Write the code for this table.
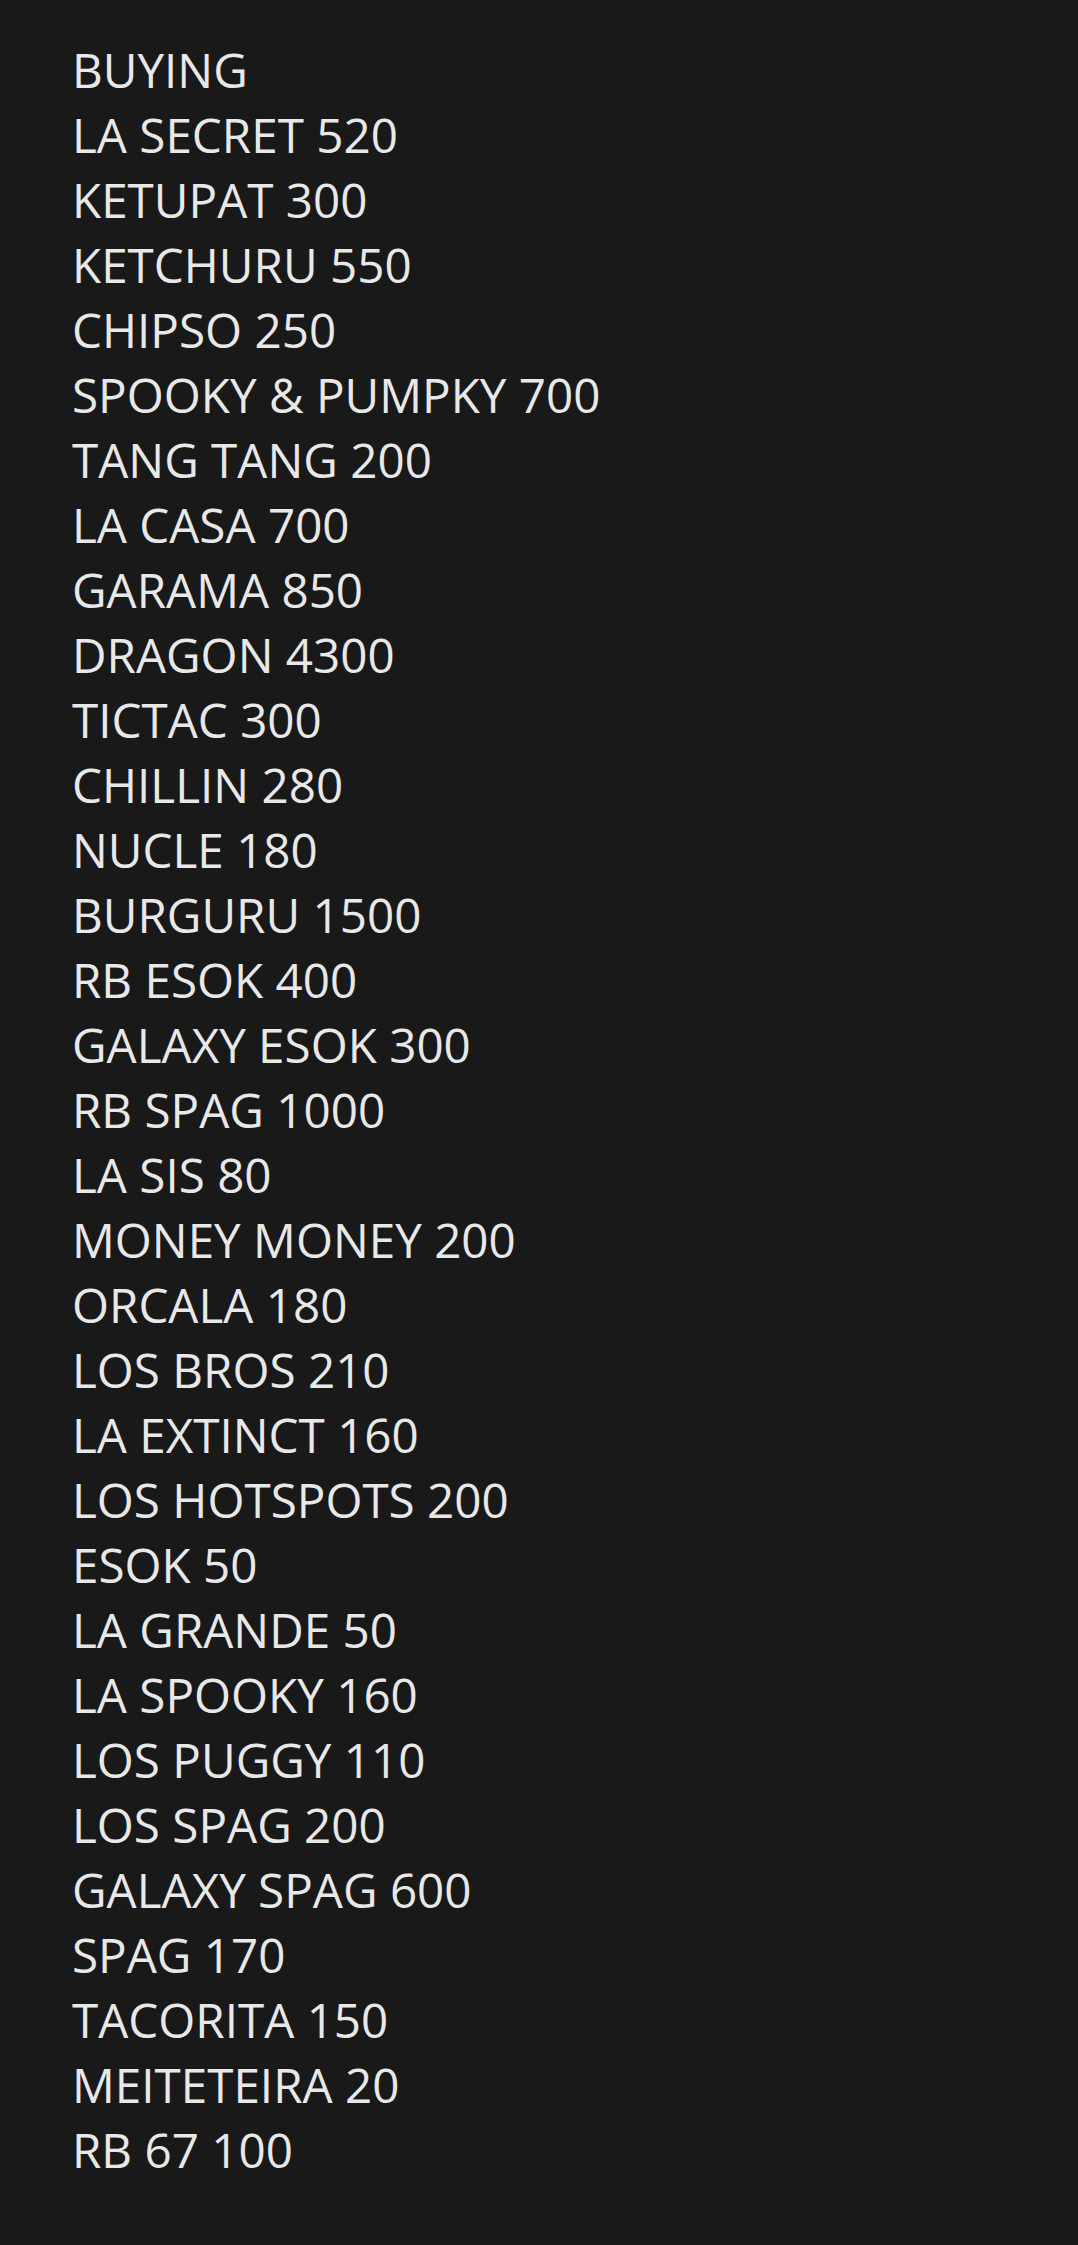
const items = [
  'BUYING',
  'LA SECRET 520',
  'KETUPAT 300',
  'KETCHURU 550',
  'CHIPSO 250',
  'SPOOKY & PUMPKY 700',
  'TANG TANG 200',
  'LA CASA 700',
  'GARAMA 850',
  'DRAGON 4300',
  'TICTAC 300',
  'CHILLIN 280',
  'NUCLE 180',
  'BURGURU 1500',
  'RB ESOK 400',
  'GALAXY ESOK 300',
  'RB SPAG 1000',
  'LA SIS 80',
  'MONEY MONEY 200',
  'ORCALA 180',
  'LOS BROS 210',
  'LA EXTINCT 160',
  'LOS HOTSPOTS 200',
  'ESOK 50',
  'LA GRANDE 50',
  'LA SPOOKY 160',
  'LOS PUGGY 110',
  'LOS SPAG 200',
  'GALAXY SPAG 600',
  'SPAG 170',
  'TACORITA 150',
  'MEITETEIRA 20',
  'RB 67 100',
];

export default function App() {
  return (
    <div className="min-h-[2245px] w-full bg-[#191919] pl-[72px] pt-[37px] font-['Open_Sans',sans-serif] text-[47.6px] leading-[65px] text-[#e8e8e8]">
      {items.map((line, i) => (
        <div key={i}>{line}</div>
      ))}
    </div>
  );
}
